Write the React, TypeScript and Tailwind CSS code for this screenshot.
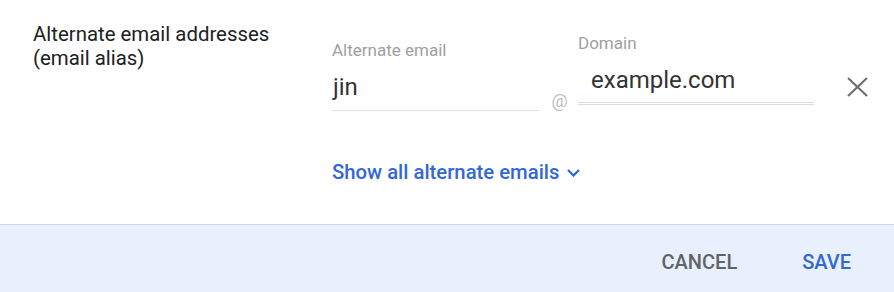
import React from "react";

export default function App() {
  return (
    <div className="w-[894px] h-[292px] bg-white flex flex-col" style={{ fontFamily: "Roboto, 'Noto Sans', Arial, sans-serif" }}>
      <div className="h-[224px] flex">
        <div className="w-[332px] pl-[33px] pt-[22px]">
          <div className="text-[20.4px] leading-[24px] text-[#202124]">
            Alternate email addresses
            <br />
            (email alias)
          </div>
        </div>
        <div className="flex flex-col">
          <div className="flex items-start pt-[33px]">
            <div className="w-[207px] mt-[7px]">
              <div className="text-[17px] leading-[20px] text-[#a0a0a0]">Alternate email</div>
              <div className="mt-[11px] pb-[7px] border-b border-[#e0e0e0]">
                <div className="text-[24px] leading-[32px] text-[#333333] pl-px">jin</div>
              </div>
            </div>
            <div className="w-[39px] flex justify-center mt-[58px]">
              <span className="text-[18px] leading-[20px] text-[#bdbdbd] pl-[2px]">@</span>
            </div>
            <div className="w-[236px]">
              <div className="text-[17px] leading-[20px] text-[#a0a0a0]">Domain</div>
              <div className="mt-[11px] pb-[6px] border-b-[3px] border-double border-[#dcdcdc]">
                <div className="text-[24px] leading-[32px] text-[#333333] pl-[13px]">example.com</div>
              </div>
            </div>
            <div className="ml-[33px] mt-[44px]">
              <svg width="21" height="20" viewBox="0 0 21 20">
                <line x1="1" y1="1" x2="20" y2="19" stroke="#6f6f6f" strokeWidth="2.2" />
                <line x1="20" y1="1" x2="1" y2="19" stroke="#6f6f6f" strokeWidth="2.2" />
              </svg>
            </div>
          </div>
          <div className="mt-[49px] flex items-center">
            <span className="text-[20.3px] leading-[24px] font-medium text-[#3367d6]">Show all alternate emails</span>
            <svg className="ml-[8px] mt-[2px]" width="13" height="8" viewBox="0 0 13 8">
              <polyline points="1,1 6.5,6.5 12,1" fill="none" stroke="#3367d6" strokeWidth="2.3" />
            </svg>
          </div>
        </div>
      </div>
      <div className="flex-1 border-t border-[#cfd6e3] bg-[#e8effd] flex justify-end items-start pt-[25px] pr-[43px] gap-[65px]">
        <span className="text-[20px] leading-[24px] font-medium text-[#5f6368]">CANCEL</span>
        <span className="text-[20px] leading-[24px] font-medium text-[#3367d6]">SAVE</span>
      </div>
    </div>
  );
}
